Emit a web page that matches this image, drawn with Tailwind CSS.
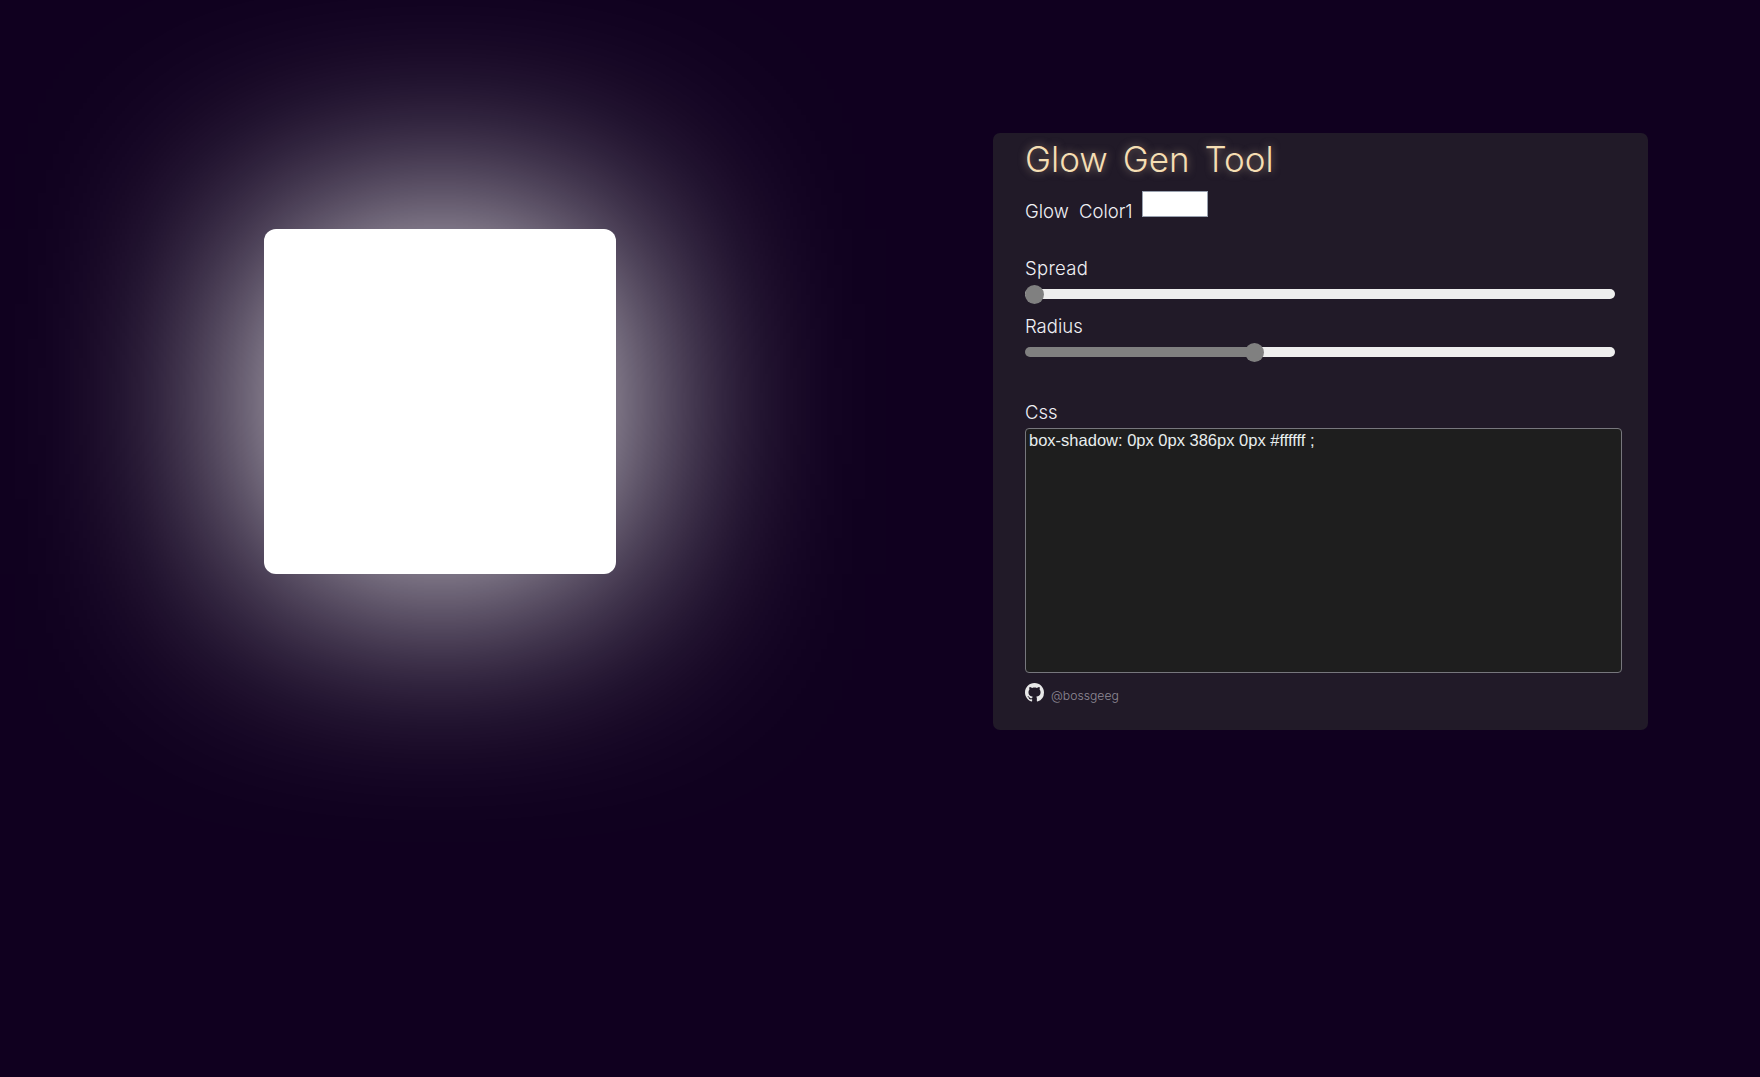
<!DOCTYPE html>
<html lang="en">
<head>
    <meta charset="UTF-8">
    <meta name="viewport" content="width=device-width, initial-scale=1.0">
    <title>Glow Gen Tool</title>
    <script src="https://cdn.jsdelivr.net/npm/@tailwindcss/browser@4"></script>
</head>
<body class="bg-[#10001f] overflow-hidden font-['Inter','Noto_Sans',sans-serif] font-light">
    <div class="w-[1760px] h-[1077px] flex items-start overflow-hidden">
        <!-- Preview -->
        <div class="w-[993px] shrink-0 pt-[229px] pl-[264px]">
            <div class="relative w-[352px] h-[345px]">
                <div class="absolute inset-0 bg-white blur-[113px]"></div>
                <div class="absolute inset-0 bg-white rounded-[12px]"></div>
            </div>
        </div>

        <!-- Tool panel -->
        <div class="relative mt-[133px] w-[655px] h-[597px] bg-[#211a28] rounded-[7px] pl-[32px] pr-[26px]">
            <h1 class="h-[52px] text-[35px] leading-[52px] text-[#f5deb3] [word-spacing:5px] [text-shadow:0_0_8px_#f5deb380] whitespace-nowrap">Glow Gen Tool</h1>

            <div class="flex items-start h-[63px] mt-[6px]">
                <label class="mt-[6px] text-[18.5px] leading-[28px] text-[#f0f0f5] [word-spacing:5px] whitespace-nowrap">Glow Color1</label>
                <div class="ml-[9px] w-[66px] h-[26px] bg-white border border-gray-400"></div>
            </div>

            <label class="block text-[18.5px] leading-[28px] text-[#f0f0f5] tracking-[0.3px]">Spread</label>
            <input type="range" min="0" max="1000" value="0" style="background:linear-gradient(to right,#808080 0%,#eeeeee 0%)" class="block appearance-none w-[590px] h-[10px] mt-[7px] rounded-full [&::-webkit-slider-thumb]:appearance-none [&::-webkit-slider-thumb]:w-[19px] [&::-webkit-slider-thumb]:h-[19px] [&::-webkit-slider-thumb]:rounded-full [&::-webkit-slider-thumb]:bg-[#808080]">

            <label class="block mt-[13px] text-[18.5px] leading-[28px] text-[#f0f0f5]">Radius</label>
            <input type="range" min="0" max="1000" value="386" style="background:linear-gradient(to right,#808080 39%,#eeeeee 39%)" class="block appearance-none w-[590px] h-[10px] mt-[7px] rounded-full [&::-webkit-slider-thumb]:appearance-none [&::-webkit-slider-thumb]:w-[19px] [&::-webkit-slider-thumb]:h-[19px] [&::-webkit-slider-thumb]:rounded-full [&::-webkit-slider-thumb]:bg-[#808080]">

            <label class="block mt-[41px] text-[18.5px] leading-[28px] text-[#f0f0f5]">Css</label>
            <textarea readonly class="block w-[597px] h-[245px] mt-[2px] bg-[#1e1e1e] border border-[#77777d] rounded-[4px] px-[3px] py-[1px] font-['Liberation_Sans',sans-serif] font-normal text-[16.5px] leading-[20px] text-[#e8eeee] resize-none outline-none">box-shadow: 0px 0px 386px 0px #ffffff ;</textarea>

            <div class="flex items-start mt-[10px]">
                <svg class="w-[19px] h-[19px] text-[#e8e8e8]" viewBox="0 0 16 16" fill="currentColor"><path d="M8 0C3.58 0 0 3.58 0 8c0 3.54 2.29 6.53 5.47 7.59.4.07.55-.17.55-.38 0-.19-.01-.82-.01-1.49-2.01.37-2.53-.49-2.69-.94-.09-.23-.48-.94-.82-1.13-.28-.15-.68-.52-.01-.53.63-.01 1.08.58 1.23.82.72 1.21 1.87.87 2.33.66.07-.52.28-.87.51-1.07-1.78-.2-3.64-.89-3.64-3.95 0-.87.31-1.59.82-2.15-.08-.2-.36-1.02.08-2.12 0 0 .67-.21 2.2.82.64-.18 1.32-.27 2-.27s1.36.09 2 .27c1.53-1.04 2.2-.82 2.2-.82.44 1.1.16 1.92.08 2.12.51.56.82 1.27.82 2.15 0 3.07-1.87 3.75-3.65 3.95.29.25.54.73.54 1.48 0 1.07-.01 1.93-.01 2.2 0 .21.15.46.55.38A8.01 8.01 0 0 0 16 8c0-4.42-3.58-8-8-8z"/></svg>
                <span class="ml-[7px] mt-[3px] text-[12.2px] leading-[20px] text-[#8f8a96]">@bossgeeg</span>
            </div>
        </div>
    </div>
</body>
</html>
